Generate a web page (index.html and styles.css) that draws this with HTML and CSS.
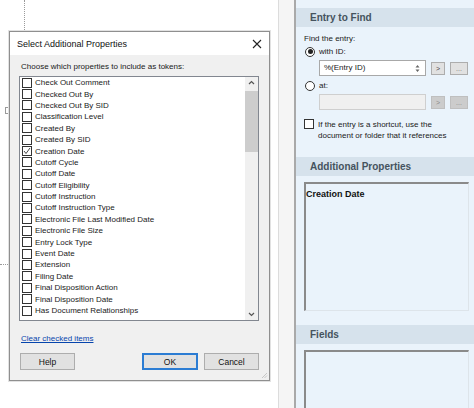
FILE: index.html
```html
<!DOCTYPE html>
<html lang="en">
<head>
    <meta charset="UTF-8">
    <title>Select Additional Properties</title>
    <link rel="stylesheet" href="styles.css">
</head>
<body>

    <div class="app">
        <!-- Workflow canvas -->
        <div class="canvas">
            <div class="tree-line-v"></div>
            <div class="tree-line-h"></div>
            <div class="tree-node"></div>
        </div>

        <div class="splitter"></div>

        <!-- Properties pane -->
        <div class="panel">
            <div class="section-head">Entry to Find</div>
            <div class="section-body find-body">
                <div class="line">Find the entry:</div>
                <label class="radio-row"><span class="radio checked"></span>with ID:</label>
                <div class="input-row">
                    <div class="field">%(Entry ID)
                        <svg class="spin" width="5" height="9" viewBox="0 0 5 9">
                            <path d="M0.5 3.5 L2.5 1 L4.5 3.5 Z M0.5 5.5 L2.5 8 L4.5 5.5 Z" fill="#666"/>
                        </svg>
                    </div>
                    <span class="mini-btn">&gt;</span>
                    <span class="mini-btn wide">...</span>
                </div>
                <label class="radio-row"><span class="radio"></span>at:</label>
                <div class="input-row disabled">
                    <div class="field"></div>
                    <span class="mini-btn">&gt;</span>
                    <span class="mini-btn wide">...</span>
                </div>
                <div class="check-row">
                    <span class="box"></span>
                    <span>If the entry is a shortcut, use the<br>document or folder that it references</span>
                </div>
            </div>

            <div class="section-head">Additional Properties</div>
            <div class="section-body">
                <div class="prop-box">Creation Date</div>
            </div>

            <div class="section-head">Fields</div>
            <div class="section-body last">
                <div class="prop-box fields-box"></div>
            </div>
        </div>
    </div>

    <!-- Modal dialog -->
    <div class="dialog">
        <div class="titlebar">
            <span>Select Additional Properties</span>
            <svg class="close" width="10" height="10" viewBox="0 0 10 10">
                <path d="M1 1 L9 9 M9 1 L1 9" stroke="#222" stroke-width="1.1" fill="none"/>
            </svg>
        </div>
        <div class="dialog-body">
            <div class="prompt">Choose which properties to include as tokens:</div>
            <div class="listbox">
                <div class="items">
                    <div class="item"><span class="box"></span>Check Out Comment</div>
                    <div class="item"><span class="box"></span>Checked Out By</div>
                    <div class="item"><span class="box"></span>Checked Out By SID</div>
                    <div class="item"><span class="box"></span>Classification Level</div>
                    <div class="item"><span class="box"></span>Created By</div>
                    <div class="item"><span class="box"></span>Created By SID</div>
                    <div class="item"><span class="box"><svg width="8" height="8" viewBox="0 0 8 8"><path d="M1 4 L3 6.5 L7 1" stroke="#333" stroke-width="0.9" fill="none"/></svg></span>Creation Date</div>
                    <div class="item"><span class="box"></span>Cutoff Cycle</div>
                    <div class="item"><span class="box"></span>Cutoff Date</div>
                    <div class="item"><span class="box"></span>Cutoff Eligibility</div>
                    <div class="item"><span class="box"></span>Cutoff Instruction</div>
                    <div class="item"><span class="box"></span>Cutoff Instruction Type</div>
                    <div class="item"><span class="box"></span>Electronic File Last Modified Date</div>
                    <div class="item"><span class="box"></span>Electronic File Size</div>
                    <div class="item"><span class="box"></span>Entry Lock Type</div>
                    <div class="item"><span class="box"></span>Event Date</div>
                    <div class="item"><span class="box"></span>Extension</div>
                    <div class="item"><span class="box"></span>Filing Date</div>
                    <div class="item"><span class="box"></span>Final Disposition Action</div>
                    <div class="item"><span class="box"></span>Final Disposition Date</div>
                    <div class="item"><span class="box"></span>Has Document Relationships</div>
                </div>
                <div class="scrollbar">
                    <svg class="arrow" width="13" height="12" viewBox="0 0 13 12">
                        <path d="M4 7 L6.5 4.5 L9 7" stroke="#555" stroke-width="1.2" fill="none"/>
                    </svg>
                    <div class="track"><div class="thumb"></div></div>
                    <svg class="arrow" width="13" height="12" viewBox="0 0 13 12">
                        <path d="M4 5 L6.5 7.5 L9 5" stroke="#555" stroke-width="1.2" fill="none"/>
                    </svg>
                </div>
            </div>
            <a class="clear-link" href="#">Clear checked items</a>
            <div class="buttons">
                <button class="btn">Help</button>
                <span class="spacer"></span>
                <button class="btn default">OK</button>
                <button class="btn">Cancel</button>
            </div>
        </div>
        <svg class="grip" width="7" height="7" viewBox="0 0 7 7">
            <path d="M6 1 L1 6 M6 3.5 L3.5 6" stroke="#bbb" stroke-width="0.8"/>
        </svg>
    </div>

</body>
</html>
```

FILE: styles.css
```css
* {
    margin: 0;
    padding: 0;
    box-sizing: border-box;
}

body {
    font-family: "Liberation Sans", Arial, sans-serif;
    font-size: 8px;
    color: #1a1a1a;
    width: 474px;
    height: 408px;
    overflow: hidden;
    position: relative;
    background-color: white;
}

.app {
    display: flex;
    height: 408px;
    overflow: hidden;
}

/* Canvas with tree connectors */
.canvas {
    flex: 1;
    position: relative;
    background-color: white;
}

.tree-line-v {
    position: absolute;
    left: 24px;
    top: 0;
    height: 32px;
    border-left: 1px dotted #9a9a9a;
}

.tree-line-h {
    position: absolute;
    left: 0;
    top: 264px;
    width: 10px;
    border-top: 1px dotted #9a9a9a;
}

.tree-node {
    position: absolute;
    left: 5px;
    top: 107px;
    width: 5px;
    height: 7px;
    border: 1px solid #9a9a9a;
    border-right: none;
}

.splitter {
    width: 18px;
    background-color: #f5f5f5;
    border-left: 1px solid #dcdcdc;
    border-right: 2px solid #a9a9a9;
}

/* Right pane */
.panel {
    width: 178px;
    background-color: #eaf3fb;
    padding-top: 8px;
    display: flex;
    flex-direction: column;
}

.section-head {
    height: 19px;
    flex-shrink: 0;
    background-color: #d6e2ec;
    color: #45535e;
    font-size: 10px;
    font-weight: bold;
    padding-left: 14px;
    line-height: 19px;
}

.section-body {
    padding: 6px 5px 14px 8px;
}

.section-body.last {
    flex: 1;
    display: flex;
    flex-direction: column;
    padding-bottom: 0;
}

.find-body {
    padding-top: 6px;
    padding-bottom: 16px;
}

.line {
    height: 11px;
    line-height: 11px;
}

.radio-row {
    display: flex;
    align-items: center;
    gap: 4px;
    height: 13px;
    margin-top: 1px;
    margin-left: 1px;
}

.radio {
    width: 10px;
    height: 10px;
    border: 1px solid #333;
    border-radius: 50%;
    background-color: white;
    display: flex;
    align-items: center;
    justify-content: center;
}

.radio.checked::after {
    content: "";
    width: 5px;
    height: 5px;
    border-radius: 50%;
    background-color: #222;
}

.input-row {
    display: flex;
    align-items: center;
    gap: 5px;
    margin: 2px 0 3px 15px;
    height: 16px;
}

.field {
    width: 107px;
    height: 16px;
    background-color: white;
    border: 1px solid #a8a8a8;
    padding-left: 4px;
    line-height: 14px;
    position: relative;
}

.spin {
    position: absolute;
    right: 5px;
    top: 3px;
}

.input-row.disabled .field {
    background-color: #f0f0f0;
    border-color: #cfcfcf;
}

.mini-btn {
    width: 14px;
    height: 13px;
    background-color: #e1e1e1;
    border: 1px solid #adadad;
    font-size: 7px;
    color: #444;
    display: flex;
    align-items: center;
    justify-content: center;
}

.mini-btn.wide {
    width: 18px;
    color: #777;
}

.input-row.disabled .mini-btn {
    background-color: #cccccc;
    border-color: #bfbfbf;
    color: #8a8a8a;
}

.check-row {
    display: flex;
    gap: 4px;
    margin-top: 9px;
    line-height: 11px;
}

.box {
    width: 10px;
    height: 10px;
    flex-shrink: 0;
    border: 1px solid #333;
    background-color: white;
    display: inline-flex;
    align-items: center;
    justify-content: center;
}

.prop-box {
    height: 129px;
    border-top: 2px solid #8a8a8a;
    border-left: 2px solid #8a8a8a;
    border-right: 1px solid #dde4ea;
    border-bottom: 1px solid #dde4ea;
    font-size: 9px;
    font-weight: bold;
    color: #111;
    padding: 5px 0 0 0;
}

.fields-box {
    flex: 1;
    height: auto;
    border-bottom: none;
}

/* Dialog window */
.dialog {
    position: absolute;
    left: 9px;
    top: 31px;
    width: 261px;
    height: 350px;
    background-color: #f0f0f0;
    border: 1px solid #8f8f8f;
    box-shadow: 0 0 0 1px #e2e2e2;
}

.titlebar {
    height: 23px;
    background-color: white;
    display: flex;
    align-items: center;
    justify-content: space-between;
    padding: 0 7px 0 7px;
    font-size: 9px;
    color: #111;
}

.close {
    display: block;
}

.dialog-body {
    padding: 7px 10px 0 9px;
}

.prompt {
    height: 10px;
    line-height: 10px;
    margin-left: 2px;
}

.listbox {
    display: flex;
    margin-top: 4px;
    height: 245px;
    background-color: white;
    border: 1px solid #828790;
}

.items {
    flex: 1;
    padding: 0 0 0 2px;
}

.item {
    display: flex;
    align-items: center;
    gap: 3px;
    height: 11.4px;
}

.scrollbar {
    width: 13px;
    background-color: #f0f0f0;
    display: flex;
    flex-direction: column;
}

.arrow {
    display: block;
}

.track {
    flex: 1;
    padding-top: 2px;
}

.thumb {
    height: 61px;
    background-color: #cdcdcd;
}

.clear-link {
    display: block;
    margin: 13px 0 0 2px;
    height: 10px;
    line-height: 10px;
    color: #0645ad;
    text-decoration: underline;
    width: fit-content;
}

.buttons {
    display: flex;
    gap: 6px;
    margin-top: 9px;
    margin-left: 1px;
}

.spacer {
    flex: 1;
}

.btn {
    width: 55px;
    height: 17px;
    background-color: #e1e1e1;
    border: 1px solid #adadad;
    font-family: "Liberation Sans", Arial, sans-serif;
    font-size: 8.5px;
    color: #111;
}

.btn.default {
    border: 2px solid #2b7cd3;
    width: 56px;
}

.grip {
    position: absolute;
    right: 1px;
    bottom: 1px;
}
```
